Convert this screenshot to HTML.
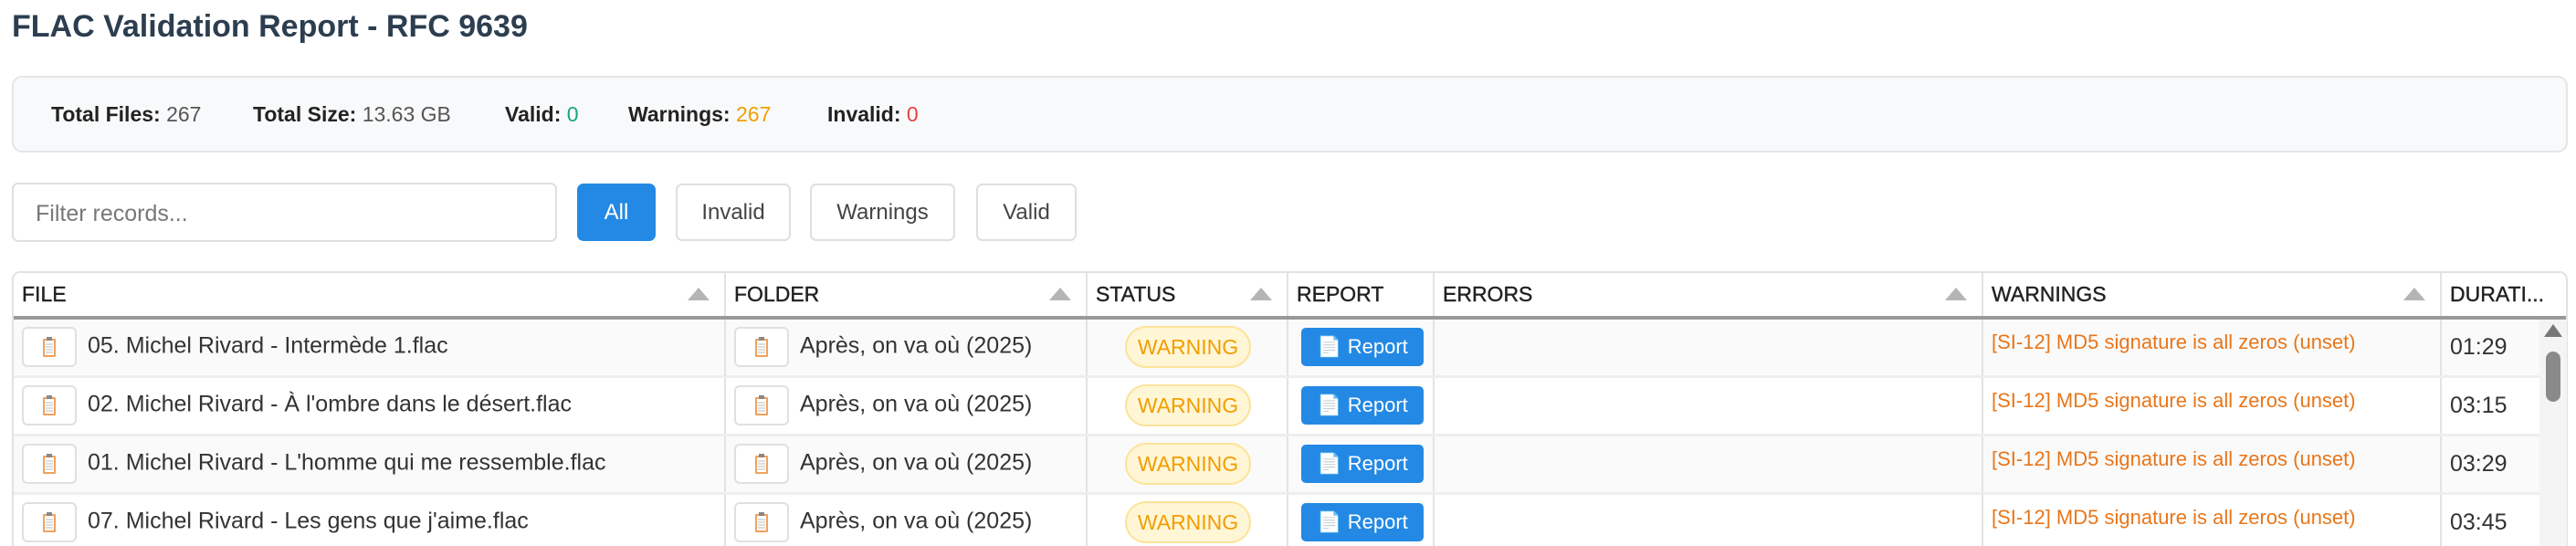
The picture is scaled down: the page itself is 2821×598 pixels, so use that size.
<!DOCTYPE html>
<html style="height:598px;overflow:hidden"><head><meta charset="utf-8">
<style>
*{box-sizing:border-box;margin:0;padding:0}
body{width:2821px;height:598px;overflow:hidden;background:#fff;font-family:"Liberation Sans",sans-serif;color:#333}
#wr{position:relative;width:2821px;height:598px;overflow:hidden}
h1{position:absolute;left:13px;top:10px;font-size:34px;font-weight:bold;color:#2c3e50}
.sum{position:absolute;left:13px;top:83px;width:2799px;height:84px;background:#f8f9fa;border:2px solid #e3e6e9;border-radius:11px}
.sum span{position:absolute;top:27px;font-size:23px;color:#555}
.sum b{color:#222;font-weight:bold}
.inp{position:absolute;left:13px;top:200px;width:597px;height:65px;border:2px solid #dcdfe3;border-radius:7px;font-size:25px;color:#777;padding:18px 24px}
.btn{position:absolute;top:201px;height:63px;border:2px solid #dcdfe3;border-radius:7px;font-size:24px;color:#444;text-align:center;line-height:59px;background:#fff}
.btn.on{background:#2389e4;border-color:#2389e4;color:#fff}
.tbl{position:absolute;left:13px;top:297px;width:2799px;height:340px;border:2px solid #dfe2e5;border-radius:9px;overflow:hidden}
table{border-collapse:collapse;table-layout:fixed;width:2799px}
th{height:49px;text-align:left;font-size:23px;font-weight:normal;color:#222;padding:0 9px;border-right:2px solid #e3e3e3;border-bottom:4px solid #999;position:relative;white-space:nowrap;overflow:hidden;-webkit-text-stroke:0.4px #222}
th .ar{position:absolute;right:16px;top:16px;width:0;height:0;border-left:12px solid transparent;border-right:12px solid transparent;border-bottom:14px solid #b5b5b5}
td{height:64px;border-right:2px solid #e3e3e3;border-bottom:3px solid #eee;font-size:25px;color:#333;padding:0 9px;white-space:nowrap;overflow:hidden;vertical-align:middle}
tr.a td{background:#fafafa}
.ib{display:inline-block;width:60px;height:44px;border:2px solid #e0e0e0;border-radius:6px;vertical-align:middle;margin-right:12px;text-align:center;padding-top:8px;background:#fff}
.bd{display:inline-block;width:138px;height:46px;border-radius:23px;background:#fff6d6;border:2px solid #fde39a;color:#f29d00;font-size:23px;text-align:center;line-height:42px;margin-left:32px}
.rb{display:inline-block;width:134px;height:42px;border-radius:5px;background:#2389e4;color:#fff;font-size:22px;line-height:42px;text-align:center;margin-left:5px}
.w{color:#e8761a;font-size:22px;vertical-align:top;padding-top:12px}
.du{padding-left:9px}
.sb{position:absolute;left:2781px;top:350px;width:30px;height:250px;background:#f4f4f4}
.th2{position:absolute;left:2788px;top:385px;width:16px;height:55px;background:#8a8a8a;border-radius:8px}
.ua{position:absolute;left:2786px;top:355px;border-left:10px solid transparent;border-right:10px solid transparent;border-bottom:14px solid #777}
</style></head><body><div id="wr">
<h1>FLAC Validation Report - RFC 9639</h1>
<div class="sum">
<span style="left:41px"><b>Total Files:</b> 267</span>
<span style="left:262px"><b>Total Size:</b> 13.63 GB</span>
<span style="left:538px"><b>Valid:</b> <i style="font-style:normal;color:#18a57a">0</i></span>
<span style="left:673px"><b>Warnings:</b> <i style="font-style:normal;color:#f0a000">267</i></span>
<span style="left:891px"><b>Invalid:</b> <i style="font-style:normal;color:#e84040">0</i></span>
</div>
<div class="inp">Filter records...</div>
<div class="btn on" style="left:632px;width:86px">All</div>
<div class="btn" style="left:740px;width:126px">Invalid</div>
<div class="btn" style="left:887px;width:159px">Warnings</div>
<div class="btn" style="left:1069px;width:110px">Valid</div>
<div class="tbl"><table>
<colgroup><col style="width:779px"><col style="width:396px"><col style="width:220px"><col style="width:160px"><col style="width:601px"><col style="width:502px"><col style="width:141px"></colgroup>
<tr><th>FILE<i class="ar"></i></th><th>FOLDER<i class="ar"></i></th><th>STATUS<i class="ar"></i></th><th>REPORT</th><th>ERRORS<i class="ar"></i></th><th>WARNINGS<i class="ar"></i></th><th>DURATI...</th></tr>
<tr class="a"><td><span class="ib"><svg width="16" height="24" viewBox="0 0 16 24"><rect x="1" y="3" width="14" height="20" fill="#f2a15c" rx="1"/><rect x="3" y="5" width="10" height="16" fill="#fff"/><rect x="5" y="1" width="6" height="4" fill="#888"/><path d="M4 9h8M4 12h8M4 15h8M4 18h8" stroke="#bbb"/></svg></span>05. Michel Rivard - Intermède 1.flac</td><td><span class="ib"><svg width="16" height="24" viewBox="0 0 16 24"><rect x="1" y="3" width="14" height="20" fill="#f2a15c" rx="1"/><rect x="3" y="5" width="10" height="16" fill="#fff"/><rect x="5" y="1" width="6" height="4" fill="#888"/><path d="M4 9h8M4 12h8M4 15h8M4 18h8" stroke="#bbb"/></svg></span>Après, on va où (2025)</td><td><span class="bd">WARNING</span></td><td><span class="rb">&#128196; Report</span></td><td></td><td class="w">[SI-12] MD5 signature is all zeros (unset)</td><td class="du">01:29</td></tr>
<tr><td><span class="ib"><svg width="16" height="24" viewBox="0 0 16 24"><rect x="1" y="3" width="14" height="20" fill="#f2a15c" rx="1"/><rect x="3" y="5" width="10" height="16" fill="#fff"/><rect x="5" y="1" width="6" height="4" fill="#888"/><path d="M4 9h8M4 12h8M4 15h8M4 18h8" stroke="#bbb"/></svg></span>02. Michel Rivard - À l'ombre dans le désert.flac</td><td><span class="ib"><svg width="16" height="24" viewBox="0 0 16 24"><rect x="1" y="3" width="14" height="20" fill="#f2a15c" rx="1"/><rect x="3" y="5" width="10" height="16" fill="#fff"/><rect x="5" y="1" width="6" height="4" fill="#888"/><path d="M4 9h8M4 12h8M4 15h8M4 18h8" stroke="#bbb"/></svg></span>Après, on va où (2025)</td><td><span class="bd">WARNING</span></td><td><span class="rb">&#128196; Report</span></td><td></td><td class="w">[SI-12] MD5 signature is all zeros (unset)</td><td class="du">03:15</td></tr>
<tr class="a"><td><span class="ib"><svg width="16" height="24" viewBox="0 0 16 24"><rect x="1" y="3" width="14" height="20" fill="#f2a15c" rx="1"/><rect x="3" y="5" width="10" height="16" fill="#fff"/><rect x="5" y="1" width="6" height="4" fill="#888"/><path d="M4 9h8M4 12h8M4 15h8M4 18h8" stroke="#bbb"/></svg></span>01. Michel Rivard - L'homme qui me ressemble.flac</td><td><span class="ib"><svg width="16" height="24" viewBox="0 0 16 24"><rect x="1" y="3" width="14" height="20" fill="#f2a15c" rx="1"/><rect x="3" y="5" width="10" height="16" fill="#fff"/><rect x="5" y="1" width="6" height="4" fill="#888"/><path d="M4 9h8M4 12h8M4 15h8M4 18h8" stroke="#bbb"/></svg></span>Après, on va où (2025)</td><td><span class="bd">WARNING</span></td><td><span class="rb">&#128196; Report</span></td><td></td><td class="w">[SI-12] MD5 signature is all zeros (unset)</td><td class="du">03:29</td></tr>
<tr><td><span class="ib"><svg width="16" height="24" viewBox="0 0 16 24"><rect x="1" y="3" width="14" height="20" fill="#f2a15c" rx="1"/><rect x="3" y="5" width="10" height="16" fill="#fff"/><rect x="5" y="1" width="6" height="4" fill="#888"/><path d="M4 9h8M4 12h8M4 15h8M4 18h8" stroke="#bbb"/></svg></span>07. Michel Rivard - Les gens que j'aime.flac</td><td><span class="ib"><svg width="16" height="24" viewBox="0 0 16 24"><rect x="1" y="3" width="14" height="20" fill="#f2a15c" rx="1"/><rect x="3" y="5" width="10" height="16" fill="#fff"/><rect x="5" y="1" width="6" height="4" fill="#888"/><path d="M4 9h8M4 12h8M4 15h8M4 18h8" stroke="#bbb"/></svg></span>Après, on va où (2025)</td><td><span class="bd">WARNING</span></td><td><span class="rb">&#128196; Report</span></td><td></td><td class="w">[SI-12] MD5 signature is all zeros (unset)</td><td class="du">03:45</td></tr>
<tr class="a"><td>&nbsp;</td><td></td><td></td><td></td><td></td><td></td><td></td></tr>
</table></div>
<div class="sb"></div><div class="ua"></div><div class="th2"></div>
</div></body></html>
